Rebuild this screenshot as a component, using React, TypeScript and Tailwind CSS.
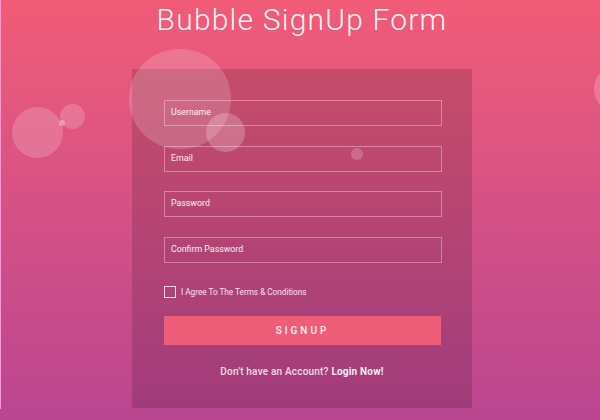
import React from "react";

const Bubble = ({ cls }: { cls: string }) => (
  <div className={`absolute rounded-full pointer-events-none ${cls}`} />
);

export default function App() {
  const fields = ["Username", "Email", "Password", "Confirm Password"];
  return (
    <div
      className="relative w-[600px] h-[420px] overflow-hidden bg-linear-to-b from-[#f15c77] to-[#ba4590] flex flex-col items-center pl-[4px]"
      style={{ fontFamily: "Roboto, 'Liberation Sans', sans-serif" }}
    >
      <div className="absolute left-0 top-0 w-[1px] h-[409px] bg-[#f39be0]" />
      <h1 className="pt-[2px] leading-[36px] text-[30px] font-light tracking-[1.2px] text-white/95">
        Bubble SignUp Form
      </h1>
      <div className="mt-[31px] w-[340px] h-[339px] bg-black/[0.14] flex flex-col px-[32px] pt-[31px]">
        <div className="flex flex-col gap-[19.5px]">
          {fields.map((f) => (
            <div
              key={f}
              className="h-[26px] w-[278px] border border-white/35 flex items-center pl-[6px] text-[8.8px] text-white/90"
            >
              {f}
            </div>
          ))}
        </div>
        <div className="mt-[23px] flex items-center gap-[5px]">
          <div className="w-[12px] h-[12px] border border-white/80" />
          <span className="text-[8.2px] text-white/85">I Agree To The Terms &amp; Conditions</span>
        </div>
        <div className="mt-[18px] h-[29px] w-[277px] bg-[#ef5e78] flex items-center justify-center text-[10px] font-medium tracking-[3px] text-white/90">
          SIGNUP
        </div>
        <div className="mt-[19px] text-center text-[10px] font-medium tracking-[0.2px] text-white/80">
          Don't have an Account? <span className="font-bold text-white/90">Login Now!</span>
        </div>
      </div>

      <Bubble cls="left-[129px] top-[49px] w-[102px] h-[100px] bg-white/[0.17]" />
      <Bubble cls="left-[206px] top-[113px] w-[39px] h-[39px] bg-white/[0.22]" />
      <Bubble cls="left-[12px] top-[107px] w-[51px] h-[51px] bg-white/[0.18]" />
      <Bubble cls="left-[60px] top-[104px] w-[25px] h-[25px] bg-white/[0.18]" />
      <Bubble cls="left-[59px] top-[120px] w-[6px] h-[6px] bg-white/[0.3]" />
      <Bubble cls="left-[351px] top-[148px] w-[12px] h-[12px] bg-white/[0.2]" />
      <Bubble cls="left-[594px] top-[64px] w-[50px] h-[50px] bg-white/[0.2]" />
    </div>
  );
}
